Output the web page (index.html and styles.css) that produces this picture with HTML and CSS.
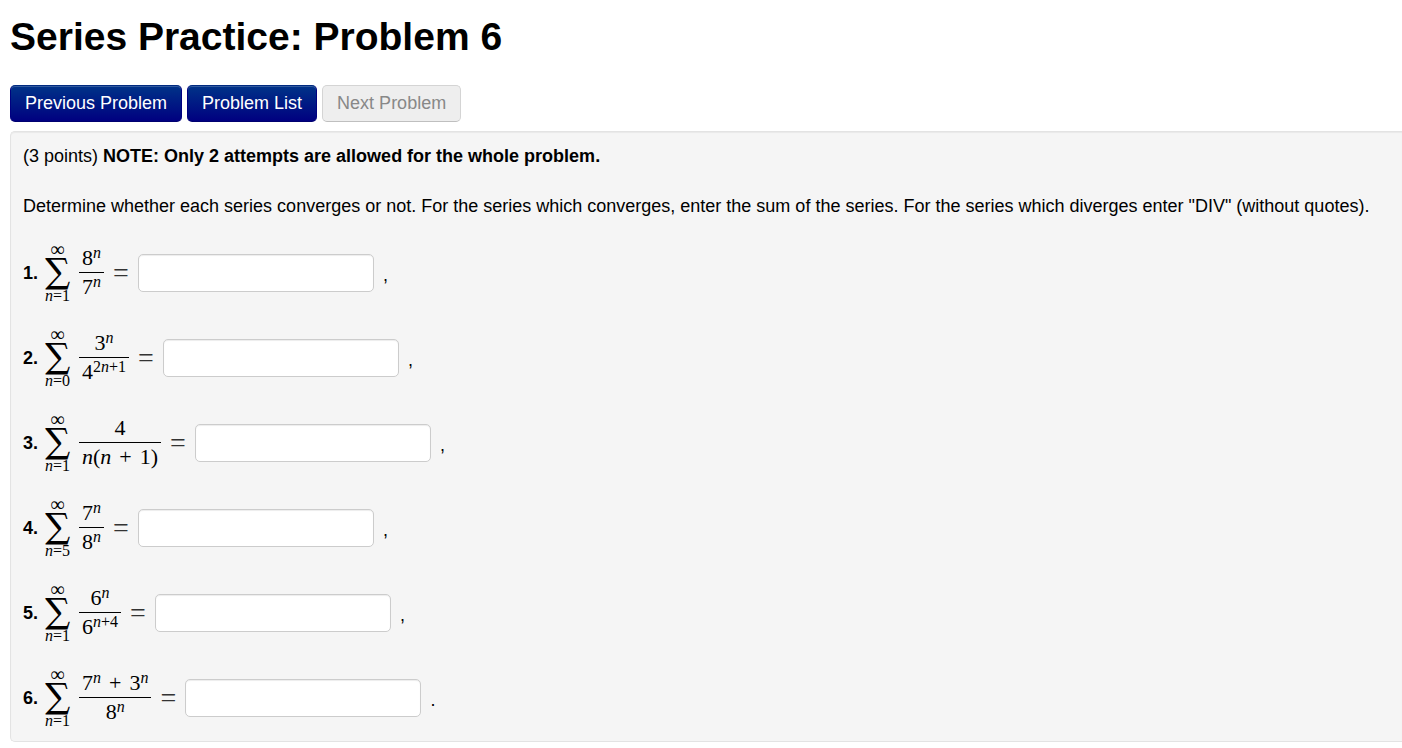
FILE: index.html
```html
<!DOCTYPE html>
<html lang="en">
<head>
<meta charset="utf-8">
<title>Series Practice: Problem 6</title>
<link rel="stylesheet" href="styles.css">
</head>
<body>
<h1 class="title">Series Practice: Problem 6</h1>
<nav class="nav" aria-label="Problems">
  <button class="btn btn-primary" type="button">Previous Problem</button>
  <button class="btn btn-primary" type="button">Problem List</button>
  <button class="btn" type="button" disabled>Next Problem</button>
</nav>
<main class="problem">
  <p class="text">(3 points) <b>NOTE: Only 2 attempts are allowed for the whole problem.</b></p>
  <p class="text">Determine whether each series converges or not. For the series which converges, enter the sum of the series. For the series which diverges enter "DIV" (without quotes).</p>
  <form class="series-list">
    <div class="series">
      <label class="number" for="a1">1.</label>
      <span class="sum"><span class="upper">∞</span><span class="sigma">∑</span><span class="lower"><i>n</i>=1</span></span>
      <span class="frac"><span class="num">8<sup><i>n</i></sup></span><span class="den">7<sup><i>n</i></sup></span></span>
      <span class="eq">=</span>
      <input class="answer" id="a1" type="text">
      <span class="punct">,</span>
    </div>
    <div class="series">
      <label class="number" for="a2">2.</label>
      <span class="sum"><span class="upper">∞</span><span class="sigma">∑</span><span class="lower"><i>n</i>=0</span></span>
      <span class="frac"><span class="num">3<sup><i>n</i></sup></span><span class="den">4<sup>2<i>n</i>+1</sup></span></span>
      <span class="eq">=</span>
      <input class="answer" id="a2" type="text">
      <span class="punct">,</span>
    </div>
    <div class="series">
      <label class="number" for="a3">3.</label>
      <span class="sum"><span class="upper">∞</span><span class="sigma">∑</span><span class="lower"><i>n</i>=1</span></span>
      <span class="frac"><span class="num">4</span><span class="den"><i>n</i>(<i>n</i><span class="op">+</span>1)</span></span>
      <span class="eq">=</span>
      <input class="answer" id="a3" type="text">
      <span class="punct">,</span>
    </div>
    <div class="series">
      <label class="number" for="a4">4.</label>
      <span class="sum"><span class="upper">∞</span><span class="sigma">∑</span><span class="lower"><i>n</i>=5</span></span>
      <span class="frac"><span class="num">7<sup><i>n</i></sup></span><span class="den">8<sup><i>n</i></sup></span></span>
      <span class="eq">=</span>
      <input class="answer" id="a4" type="text">
      <span class="punct">,</span>
    </div>
    <div class="series">
      <label class="number" for="a5">5.</label>
      <span class="sum"><span class="upper">∞</span><span class="sigma">∑</span><span class="lower"><i>n</i>=1</span></span>
      <span class="frac"><span class="num">6<sup><i>n</i></sup></span><span class="den">6<sup><i>n</i>+4</sup></span></span>
      <span class="eq">=</span>
      <input class="answer" id="a5" type="text">
      <span class="punct">,</span>
    </div>
    <div class="series">
      <label class="number" for="a6">6.</label>
      <span class="sum"><span class="upper">∞</span><span class="sigma">∑</span><span class="lower"><i>n</i>=1</span></span>
      <span class="frac"><span class="num">7<sup><i>n</i></sup><span class="op">+</span>3<sup><i>n</i></sup></span><span class="den">8<sup><i>n</i></sup></span></span>
      <span class="eq">=</span>
      <input class="answer" id="a6" type="text">
      <span class="punct">.</span>
    </div>
  </form>
</main>
</body>
</html>
```
FILE: styles.css
```css
* { box-sizing: border-box; }

body {
  margin: 0 0 0 10px;
  background: #fff;
  color: #000;
  font: 18px/25px "Liberation Sans", Arial, sans-serif;
}

.title {
  margin: 0;
  padding: 12px 0 23px;
  font-size: 39px;
  line-height: 50px;
}

.nav {
  display: flex;
  gap: 5px;
  margin-bottom: 9px;
}

.btn {
  padding: 5px 14px;
  border: 1px solid #d4d4d4;
  border-bottom-color: #bfbfbf;
  border-radius: 5px;
  background: #eee;
  color: #888;
  font: inherit;
}

.btn-primary {
  border-color: #002a80 #000080 #000070;
  background: linear-gradient(#003388, #000080);
  box-shadow: inset 0 1px 0 rgba(255, 255, 255, 0.2);
  color: #fff;
}

.problem {
  padding: 12px 12px 14px;
  border: 1px solid #e3e3e3;
  border-right: 0;
  border-radius: 5px 0 0 5px;
  background: #f5f5f5;
  box-shadow: inset 0 1px 1px rgba(0, 0, 0, 0.05);
}

.text { margin: 0 0 25px; }

.series-list {
  display: flex;
  flex-direction: column;
  gap: 27px;
}

.series {
  display: flex;
  align-items: center;
}

.number {
  width: 20px;
  font-weight: bold;
}

.sum, .frac, .eq { font-family: "Liberation Serif", "Times New Roman", serif; }

.sum {
  display: flex;
  flex-direction: column;
  align-items: center;
  width: 29px;
}

.upper {
  font-size: 20px;
  line-height: 10px;
}

.sigma {
  padding-top: 3px;
  font-family: "DejaVu Math TeX Gyre", "Liberation Serif", serif;
  font-size: 30px;
  line-height: 32px;
}

.lower {
  font-size: 16px;
  line-height: 13px;
}

.frac {
  display: flex;
  flex-direction: column;
  margin: 0 9px 0 7px;
  padding-bottom: 1px;
  font-size: 22px;
  line-height: 28px;
  text-align: center;
}

.num, .den { padding: 0 3px; }

.num { border-bottom: 1px solid #000; }

.frac sup {
  font-size: 16px;
  line-height: 0;
  vertical-align: 7px;
}

.op { margin: 0 8px; }

.eq {
  width: 25px;
  padding-bottom: 2px;
  color: #333;
  font-size: 28px;
}

.answer {
  width: 236px;
  height: 38px;
  padding: 5px 8px;
  border: 1px solid #ccc;
  border-radius: 5px;
  background: #fff;
  box-shadow: inset 0 1px 1px rgba(0, 0, 0, 0.075);
  font: inherit;
}

.punct {
  margin-left: 9px;
  padding-top: 4px;
}
```
